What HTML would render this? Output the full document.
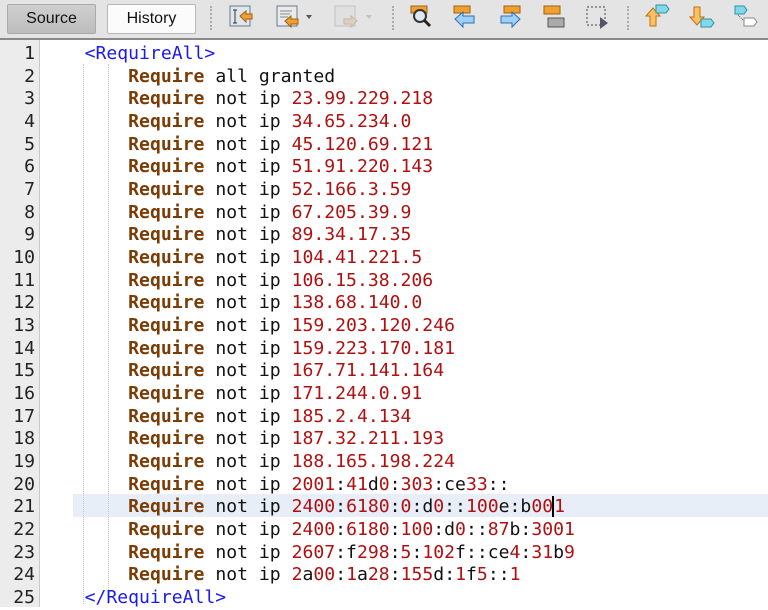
<!DOCTYPE html>
<html><head><meta charset="utf-8"><style>
html,body{margin:0;padding:0;width:768px;height:607px;overflow:hidden;background:#fff}
#tb{position:absolute;left:0;top:0;width:768px;height:38px;background:#e4e4e4;border-bottom:2px solid #8a8a8a}
.btn{position:absolute;top:4px;height:28px;border:1px solid #b8b8b8;border-radius:2px;font:16px "Liberation Sans",sans-serif;color:#111;text-align:center;line-height:28px}
.sep{position:absolute;top:6px;height:24px;border-left:2px dotted #aaa}
#gut{position:absolute;left:0;top:40px;width:39px;height:567px;background:#ececec;border-right:1px solid #c9c9c9}
#code{position:absolute;left:41px;top:43px;font:18.1px "DejaVu Sans Mono",monospace;white-space:pre;line-height:22.67px;color:#111}
.k{color:#7a3c05;font-weight:bold}
.t{color:#1a1aee}
i{font-style:normal;color:#b01010}
#hl{position:absolute;left:73px;top:494px;width:695px;height:22.5px;background:#e8eef7}
.g{position:absolute;top:64px;height:540px;border-left:1px dotted #c8c8c8}
svg{position:absolute;top:3px}
</style></head><body>
<div id="tb">
<div class="btn" style="left:7px;width:87px;background:linear-gradient(#cfcfcf,#bdbdbd);border-color:#aaa">Source</div>
<div class="btn" style="left:107px;width:87px;background:#fbfbfb">History</div>
<div class="sep" style="left:210px"></div>
<svg style="left:228px" width="28" height="28"><rect x="2" y="3" width="20" height="20" fill="#dfe6ee" stroke="#6a7a8a"/><path d="M7 7v13M5 7h4M5 20h4" stroke="#333" fill="none"/><path d="M12 13l6-5v3h6v5h-6v3z" fill="#f0a030" stroke="#a06010"/></svg>
<svg style="left:275px" width="40" height="28"><rect x="2" y="3" width="20" height="20" fill="#e8eaee" stroke="#6a7a8a"/><path d="M5 8h12M5 11h10M5 14h8" stroke="#888"/><path d="M10 18l6-5v3h7v5h-7v3z" fill="#f0a030" stroke="#a06010"/><path d="M31 12h6l-3 4z" fill="#555"/></svg>
<svg style="left:333px" width="40" height="28" opacity=".45"><rect x="2" y="3" width="20" height="20" fill="#ddd" stroke="#999"/><path d="M24 18l-6-5v3h-7v5h7v3z" fill="#d8b890" stroke="#a08060"/><path d="M33 12h6l-3 4z" fill="#999"/></svg>
<div class="sep" style="left:392px"></div>
<svg style="left:408px" width="28" height="28"><rect x="3" y="3" width="16" height="7" fill="#f0a030" stroke="#a06010"/><circle cx="12" cy="13" r="6" fill="#dde8f0" stroke="#333" stroke-width="2"/><path d="M16 17l6 6" stroke="#222" stroke-width="3"/></svg>
<svg style="left:451px" width="28" height="28"><rect x="3" y="3" width="16" height="7" fill="#f0a030" stroke="#a06010"/><path d="M4 16l8-7v4h11v7h-11v4z" fill="#9fd0f5" stroke="#2a70b8"/></svg>
<svg style="left:496px" width="28" height="28"><rect x="8" y="3" width="16" height="7" fill="#f0a030" stroke="#a06010"/><path d="M24 16l-8-7v4h-11v7h11v4z" fill="#9fd0f5" stroke="#2a70b8"/></svg>
<svg style="left:541px" width="28" height="28"><rect x="3" y="3" width="16" height="8" fill="#f0a030" stroke="#a06010"/><rect x="7" y="15" width="16" height="9" fill="#aaa" stroke="#555"/></svg>
<svg style="left:584px" width="28" height="28"><rect x="3" y="4" width="18" height="18" fill="none" stroke="#444" stroke-dasharray="2 2"/><path d="M16 14l8 6-8 6z" fill="#556"/></svg>
<div class="sep" style="left:627px"></div>
<svg style="left:644px" width="28" height="28"><path d="M2 13l7-8 7 8h-4v10h-6v-10z" fill="#ffc060" stroke="#c07010"/><path d="M12 2h10l3 4-3 4h-10z" fill="#80d8e8" stroke="#3090a8"/></svg>
<svg style="left:688px" width="28" height="28"><path d="M2 14l7 8 7-8h-4v-10h-6v10z" fill="#ffc060" stroke="#c07010"/><path d="M13 16h10l3 4-3 4h-10z" fill="#80d8e8" stroke="#3090a8"/></svg>
<svg style="left:732px" width="28" height="28"><path d="M3 3h9l3 4-3 4h-9z" fill="#80d8e8" stroke="#3090a8"/><path d="M12 15h10l3 4-3 4h-10z" fill="#fff" stroke="#888"/><path d="M6 12l5 5" stroke="#555" stroke-dasharray="1 1"/></svg>
</div>
<div id="gut"></div>
<div id="hl"></div>
<div class="g" style="left:83px"></div>
<div class="g" style="left:108px"></div>
<div id="code"><span class="t">    &lt;RequireAll&gt;</span>
        <span class="k">Require</span> all granted
        <span class="k">Require</span> not ip <i>23.99.229.218</i>
        <span class="k">Require</span> not ip <i>34.65.234.0</i>
        <span class="k">Require</span> not ip <i>45.120.69.121</i>
        <span class="k">Require</span> not ip <i>51.91.220.143</i>
        <span class="k">Require</span> not ip <i>52.166.3.59</i>
        <span class="k">Require</span> not ip <i>67.205.39.9</i>
        <span class="k">Require</span> not ip <i>89.34.17.35</i>
        <span class="k">Require</span> not ip <i>104.41.221.5</i>
        <span class="k">Require</span> not ip <i>106.15.38.206</i>
        <span class="k">Require</span> not ip <i>138.68.140.0</i>
        <span class="k">Require</span> not ip <i>159.203.120.246</i>
        <span class="k">Require</span> not ip <i>159.223.170.181</i>
        <span class="k">Require</span> not ip <i>167.71.141.164</i>
        <span class="k">Require</span> not ip <i>171.244.0.91</i>
        <span class="k">Require</span> not ip <i>185.2.4.134</i>
        <span class="k">Require</span> not ip <i>187.32.211.193</i>
        <span class="k">Require</span> not ip <i>188.165.198.224</i>
        <span class="k">Require</span> not ip <i>2001</i>:<i>41</i>d<i>0</i>:<i>303</i>:ce<i>33</i>::
        <span class="k">Require</span> not ip <i>2400</i>:<i>6180</i>:<i>0</i>:d<i>0</i>::<i>100</i>e:b<i>00</i><span style="border-left:2px solid #000;margin-left:-1px"><i>1</i></span>
        <span class="k">Require</span> not ip <i>2400</i>:<i>6180</i>:<i>100</i>:d<i>0</i>::<i>87</i>b:<i>3001</i>
        <span class="k">Require</span> not ip <i>2607</i>:f<i>298</i>:<i>5</i>:<i>102</i>f::ce<i>4</i>:<i>31</i>b<i>9</i>
        <span class="k">Require</span> not ip <i>2</i>a<i>00</i>:<i>1</i>a<i>28</i>:<i>155</i>d:<i>1</i>f<i>5</i>::<i>1</i>
<span class="t">    &lt;/RequireAll&gt;</span></div>
<div style="position:absolute;left:0;top:43px;width:35px;text-align:right;font:18.1px 'DejaVu Sans Mono',monospace;line-height:22.67px;color:#222;white-space:pre">1
2
3
4
5
6
7
8
9
10
11
12
13
14
15
16
17
18
19
20
21
22
23
24
25</div>
</body></html>
